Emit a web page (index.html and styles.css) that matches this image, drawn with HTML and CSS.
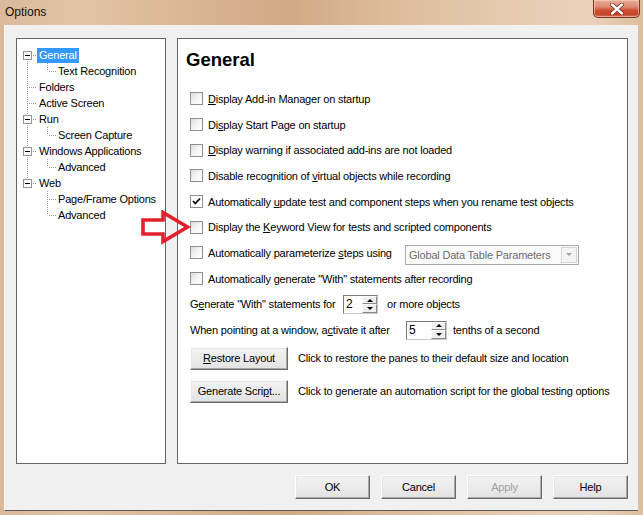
FILE: index.html
```html
<!DOCTYPE html>
<html>
<head>
<meta charset="utf-8">
<title>Options</title>
<link rel="stylesheet" href="styles.css">
</head>
<body>
<div class="window">
  <div class="titlebar">
    <div class="title">Options</div>
    <div class="close">
      <svg width="16" height="12" viewBox="0 0 16 12"><path d="M3 1.5 L13 10.5 M13 1.5 L3 10.5" stroke="#6b2a1e" stroke-width="4" stroke-linecap="round"/><path d="M3 1.5 L13 10.5 M13 1.5 L3 10.5" stroke="#ffffff" stroke-width="2.4" stroke-linecap="round"/></svg>
    </div>
  </div>
  <div class="client">
    <div class="panes">
      <div class="tree">
        <div class="node"><span class="g box vb h"><span class="minus"></span></span><span class="lbl sel">General</span></div>
        <div class="node"><span class="g vf"></span><span class="g2 vt h"></span><span class="lbl">Text Recognition</span></div>
        <div class="node"><span class="g vf h"></span><span class="lbl">Folders</span></div>
        <div class="node"><span class="g vf h"></span><span class="lbl">Active Screen</span></div>
        <div class="node"><span class="g box vf h"><span class="minus"></span></span><span class="lbl">Run</span></div>
        <div class="node"><span class="g vf"></span><span class="g2 vt h"></span><span class="lbl">Screen Capture</span></div>
        <div class="node"><span class="g box vf h"><span class="minus"></span></span><span class="lbl">Windows Applications</span></div>
        <div class="node"><span class="g vf"></span><span class="g2 vt h"></span><span class="lbl">Advanced</span></div>
        <div class="node"><span class="g box vt h"><span class="minus"></span></span><span class="lbl">Web</span></div>
        <div class="node"><span class="g"></span><span class="g2 vf h"></span><span class="lbl">Page/Frame Options</span></div>
        <div class="node"><span class="g"></span><span class="g2 vt h"></span><span class="lbl">Advanced</span></div>
      </div>
      <div class="page">
        <h1 class="heading">General</h1>
        <div class="opts">
          <div class="row"><span class="cb"></span><span><u>D</u>isplay Add-in Manager on startup</span></div>
          <div class="row"><span class="cb"></span><span>Di<u>s</u>play Start Page on startup</span></div>
          <div class="row"><span class="cb"></span><span><u>D</u>isplay warning if associated add-ins are not loaded</span></div>
          <div class="row"><span class="cb"></span><span>Disable recognition of <u>v</u>irtual objects while recording</span></div>
          <div class="row"><span class="cb checked"><svg width="11" height="11" viewBox="0 0 11 11"><path d="M2 5 L4.3 7.5 L9 2.5" fill="none" stroke="#000" stroke-width="1.8"/></svg></span><span>Automatically <u>u</u>pdate test and component steps when you rename test objects</span></div>
          <div class="row"><span class="cb"></span><span>Display the <u>K</u>eyword View for tests and scripted components</span></div>
          <div class="row"><span class="cb"></span><span class="plabel">Automatically parameterize <u>s</u>teps using</span>
            <span class="combo"><span class="ctext">Global Data Table Parameters</span><span class="cbtn"><span class="tri down dis"></span></span></span>
          </div>
          <div class="row"><span class="cb"></span><span>Automatically <u>g</u>enerate "With" statements after recording</span></div>
          <div class="row"><span class="slabel1">G<u>e</u>nerate "With" statements for</span>
            <span class="spin w1"><span class="sval">2</span><span class="sbtns"><span class="sb"><span class="tri up"></span></span><span class="sb"><span class="tri down"></span></span></span></span>
            <span class="after1">or more objects</span>
          </div>
          <div class="row"><span class="slabel2">When pointing at a window, a<u>c</u>tivate it after</span>
            <span class="spin w2"><span class="sval">5</span><span class="sbtns"><span class="sb"><span class="tri up"></span></span><span class="sb"><span class="tri down"></span></span></span></span>
            <span class="after2">tenths of a second</span>
          </div>
          <div class="brow first"><span class="btn wide"><u>R</u>estore Layout</span><span class="bdesc">Click to restore the panes to their default size and location</span></div>
          <div class="brow"><span class="btn wide">Generate Scri<u>p</u>t...</span><span class="bdesc">Click to generate an automation script for the global testing options</span></div>
        </div>
      </div>
    </div>
    <div class="buttons">
      <span class="btn">OK</span>
      <span class="btn">Cancel</span>
      <span class="btn disabled">Apply</span>
      <span class="btn">Help</span>
    </div>
  </div>
  <svg class="arrow" width="52" height="36" viewBox="0 0 52 36"><path d="M3 10 L23 10 L23 2.5 L47.5 17 L23 31.5 L23 24 L3 24 Z" fill="none" stroke="#e3202b" stroke-width="3.6" stroke-linejoin="miter"/></svg>
</div>
</body>
</html>
```
FILE: styles.css
```css
html, body {
  margin: 0;
  padding: 0;
}
body {
  font-family: "Liberation Sans", Arial, sans-serif;
  font-size: 11px;
  letter-spacing: -0.2px;
  color: #000;
  background: #dcbc9c;
}
.window {
  position: relative;
  width: 643px;
  height: 515px;
  overflow: hidden;
  background: linear-gradient(90deg, #dab99a 0%, #e2c4a6 12%, #d9b593 30%, #d1a985 45%, #dcbb9a 60%, #e6cbb0 80%, #e9d2ba 92%, #ddbd9e 100%);
}
.titlebar {
  height: 25px;
  display: flex;
  justify-content: space-between;
  align-items: flex-start;
}
.title {
  padding: 5px 0 0 5px;
  font-size: 12px;
  line-height: 14px;
  letter-spacing: 0;
  color: #111;
}
.close {
  box-sizing: border-box;
  width: 47px;
  height: 18px;
  margin-right: 3px;
  border: 1px solid #7d3526;
  border-top: none;
  border-radius: 0 0 5px 5px;
  background: linear-gradient(180deg, #e9ab98 0%, #df8a72 40%, #cd4f34 60%, #c6442a 85%, #d8775d 100%);
  display: flex;
  align-items: center;
  justify-content: center;
  box-shadow: inset 0 0 0 1px rgba(255,220,200,0.5);
}
.client {
  box-sizing: border-box;
  margin-left: 4px;
  width: 634px;
  height: 486px;
  background: #f0f0f0;
  border-bottom: 1px solid #5a5a5a;
  border-left: 1px solid #fafafa;
  padding: 13px 10px 0 11px;
}
.panes {
  display: flex;
  gap: 11px;
  height: 426px;
}
.tree {
  box-sizing: border-box;
  width: 150px;
  height: 426px;
  background: #fff;
  border: 1px solid #646464;
  padding-top: 8px;
}
.node {
  display: flex;
  height: 16px;
  align-items: center;
}
.g, .g2 {
  position: relative;
  height: 16px;
  flex: 0 0 auto;
}
.g { width: 20px; }
.g2 { width: 19px; }
.g::before, .g2::before {
  content: none;
  position: absolute;
  left: 10px;
  width: 1px;
  background: repeating-linear-gradient(180deg, #9a9a9a 0 1px, transparent 1px 2px);
}
.g::after, .g2::after {
  content: none;
  position: absolute;
  top: 8px;
  left: 11px;
  height: 1px;
  background: repeating-linear-gradient(90deg, transparent 0 1px, #9a9a9a 1px 2px);
}
.g::after { width: 9px; }
.g2::after { width: 8px; }
.vf::before { content: ""; top: 0; height: 16px; }
.vt::before { content: ""; top: 0; height: 8px; }
.vb::before { content: ""; top: 8px; height: 8px; }
.h::after { content: ""; }
.minus {
  position: absolute;
  box-sizing: border-box;
  left: 6px;
  top: 4px;
  width: 9px;
  height: 9px;
  border: 1px solid #919191;
  background: #fff;
  z-index: 1;
}
.minus::after {
  content: "";
  position: absolute;
  left: 1px;
  top: 3px;
  width: 5px;
  height: 1px;
  background: #000;
}
.lbl {
  padding: 0 2px;
  height: 15px;
  line-height: 15px;
  white-space: nowrap;
}
.sel {
  background: #3399ff;
  color: #fff;
}
.page {
  box-sizing: border-box;
  width: 451px;
  height: 426px;
  background: #fff;
  border: 1px solid #646464;
  padding: 10px 0 0 12px;
}
.heading {
  margin: 0 0 0 -4px;
  font-size: 18.5px;
  line-height: 22px;
  letter-spacing: 0;
  font-weight: bold;
}
.opts {
  margin-top: 15px;
}
.row {
  height: 25.7px;
  display: flex;
  align-items: center;
  white-space: nowrap;
}
.cb {
  box-sizing: border-box;
  width: 13px;
  height: 13px;
  margin-right: 5px;
  border: 1px solid #8e8f8f;
  background: linear-gradient(135deg, #dcdcdc 0%, #f4f4f4 50%, #fff 100%);
  display: flex;
  align-items: center;
  justify-content: center;
  flex: 0 0 auto;
}
.cb.checked {
  background: #fff;
}
.plabel {
  flex: 0 0 197px;
}
.combo {
  box-sizing: border-box;
  width: 174px;
  height: 20px;
  margin-top: 4px;
  border: 1px solid #a9a9a9;
  background: #fafafa;
  display: flex;
  align-items: center;
  justify-content: space-between;
}
.ctext {
  color: #6d6d6d;
  padding-left: 3px;
  font-size: 11px;
}
.cbtn {
  box-sizing: border-box;
  width: 16px;
  height: 16px;
  margin-right: 1px;
  border: 1px solid #d6d6d6;
  background: #f4f4f4;
  display: flex;
  align-items: center;
  justify-content: center;
}
.tri {
  width: 0;
  height: 0;
  border-left: 3px solid transparent;
  border-right: 3px solid transparent;
}
.tri.down { border-top: 3px solid #000; }
.tri.up { border-bottom: 3px solid #000; }
.tri.down.dis { border-top-color: #a5a5a5; }
.slabel1 { flex: 0 0 153px; }
.slabel2 { flex: 0 0 216px; }
.spin {
  box-sizing: border-box;
  height: 19px;
  border: 1px solid #7a7a7a;
  border-right-color: #c8c8c8;
  border-bottom-color: #c8c8c8;
  background: #fff;
  display: flex;
  justify-content: space-between;
  font-size: 12px;
}
.spin.w1 { width: 35px; }
.spin.w2 { width: 41px; }
.sval {
  padding-left: 2px;
  line-height: 17px;
}
.sbtns {
  width: 15px;
  display: flex;
  flex-direction: column;
}
.sb {
  box-sizing: border-box;
  flex: 1;
  background: #eeeeee;
  border: 1px solid #fff;
  border-right-color: #8a8a8a;
  border-bottom-color: #8a8a8a;
  display: flex;
  align-items: center;
  justify-content: center;
}
.after1 { margin-left: 9px; }
.after2 { margin-left: 6px; }
.brow {
  display: flex;
  align-items: center;
  margin-top: 10px;
  white-space: nowrap;
}
.brow.first { margin-top: 4px; }
.btn {
  box-sizing: border-box;
  width: 75px;
  height: 24px;
  display: flex;
  align-items: center;
  justify-content: center;
  background: linear-gradient(180deg, #f2f2f2 0%, #ebebeb 50%, #e2e2e2 100%);
  border: 1px solid;
  border-color: #fdfdfd #6a6a6a #6a6a6a #fdfdfd;
  box-shadow: inset -1px -1px 0 #a9a9a9, inset 1px 1px 0 #e6e6e6;
  white-space: nowrap;
}
.btn.wide {
  width: 98px;
  height: 23px;
}
.btn.disabled { color: #a0a0a0; }
.bdesc { margin-left: 10px; }
.buttons {
  display: flex;
  justify-content: flex-end;
  gap: 11px;
  margin-top: 11px;
}
.arrow {
  position: absolute;
  left: 140px;
  top: 210px;
}
```
